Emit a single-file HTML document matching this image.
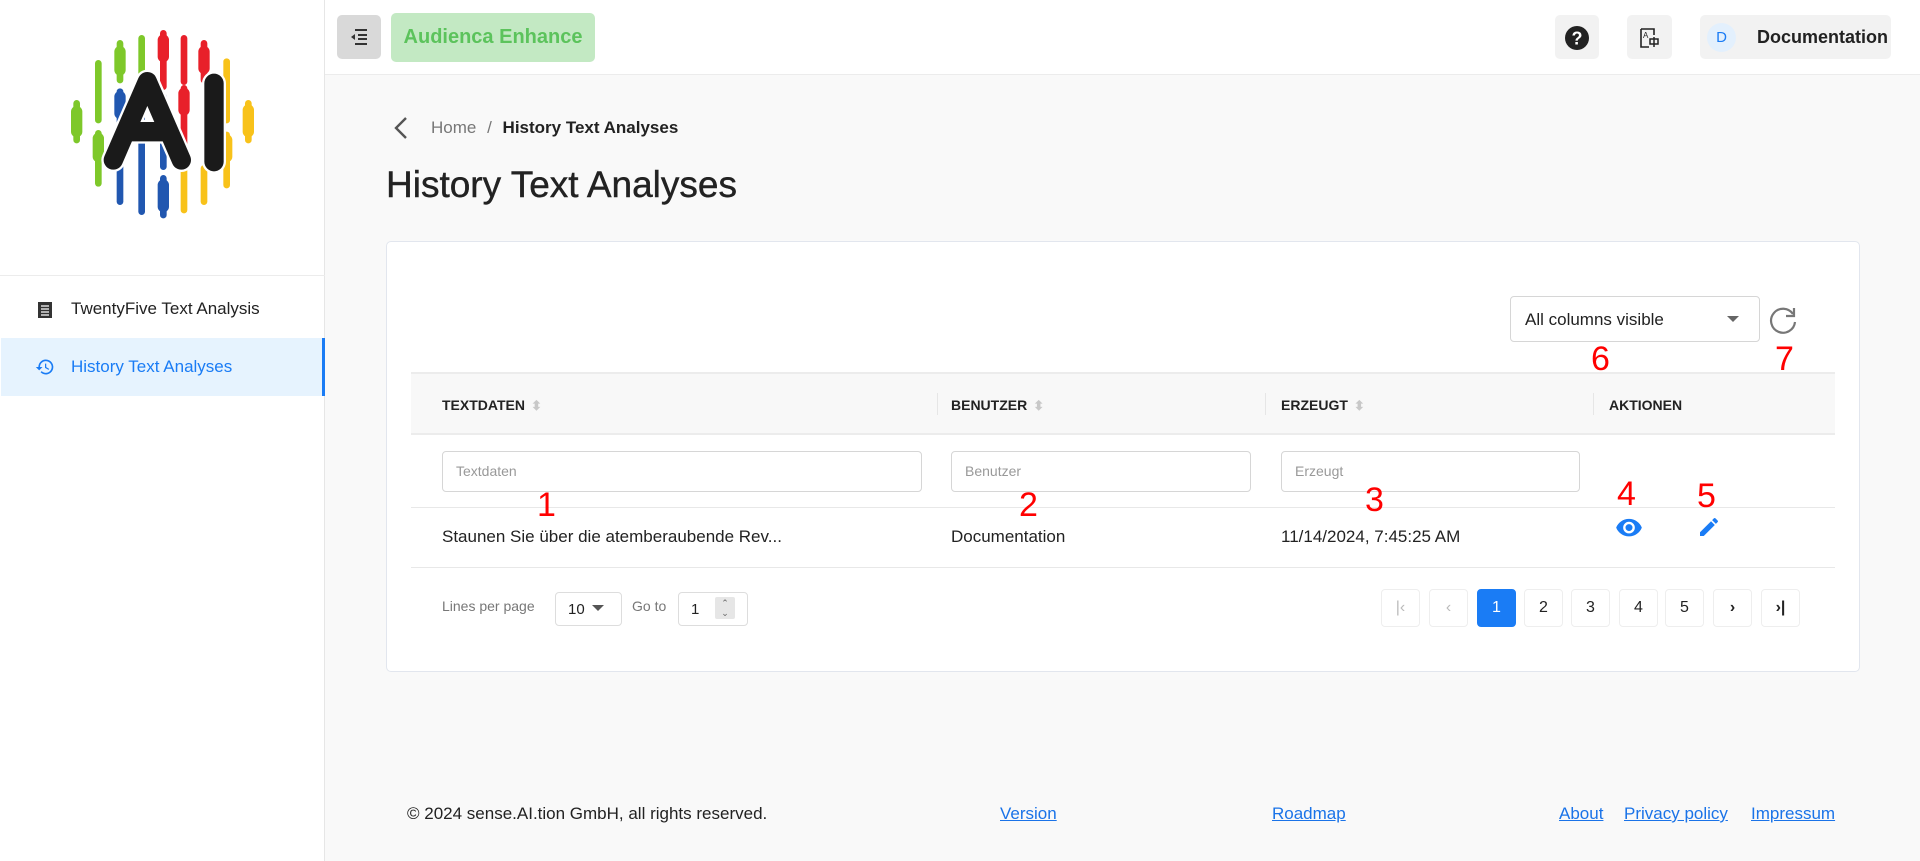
<!DOCTYPE html>
<html><head><meta charset="utf-8"><style>
*{box-sizing:border-box;margin:0;padding:0}
body{width:1920px;height:861px;overflow:hidden;background:#f9f9f9;font-family:"Liberation Sans",sans-serif;color:#222;position:relative}
.abs{position:absolute}
.side{left:0;top:0;width:325px;height:861px;background:#fff;border-right:1px solid #e6e6e6}
.top{left:325px;top:0;width:1595px;height:75px;background:#fff;border-bottom:1px solid #ececec}
.btn{background:#f2f2f2;border-radius:5px}
.card{left:386px;top:241px;width:1474px;height:431px;background:#fff;border:1px solid #e2e6ee;border-radius:5px}
.red{color:#f00;font-size:34px;font-family:"Liberation Sans",sans-serif}
.th{font-size:14px;font-weight:bold;color:#222;top:397px}
.srt{color:#c8c8c8;font-size:13px;margin-left:6px}
.inp{top:451px;height:41px;border:1px solid #d6d6d6;border-radius:4px;background:#fff;font-size:14px;color:#999;padding:11px 13px}
.pg{top:589px;width:39px;height:38px;border:1px solid #eee;border-radius:4px;background:#fff;font-size:16px;text-align:center;line-height:36px;color:#222}
.foot{top:804px;font-size:17px}
.foot a{color:#1a73e8;text-decoration:underline}
</style></head><body>
<div class="abs side"></div>
<svg class="abs" style="left:60px;top:20px" width="210" height="210" viewBox="0 0 630 630">
<g stroke-linecap="round" stroke-width="20" fill="none">
<line x1="50" y1="250" x2="50" y2="360" stroke="#7ec82a"/><line x1="50" y1="275" x2="50" y2="335" stroke="#7ec82a" stroke-width="34"/>
<line x1="115" y1="130" x2="115" y2="300" stroke="#7ec82a"/><line x1="115" y1="340" x2="115" y2="490" stroke="#7ec82a"/><line x1="115" y1="355" x2="115" y2="410" stroke="#7ec82a" stroke-width="34"/>
<line x1="180" y1="70" x2="180" y2="180" stroke="#7ec82a"/><line x1="180" y1="95" x2="180" y2="150" stroke="#7ec82a" stroke-width="34"/>
<line x1="180" y1="215" x2="180" y2="545" stroke="#2157b0"/><line x1="180" y1="230" x2="180" y2="280" stroke="#2157b0" stroke-width="34"/>
<line x1="245" y1="55" x2="245" y2="165" stroke="#7ec82a"/><line x1="245" y1="235" x2="245" y2="575" stroke="#2157b0"/>
<line x1="310" y1="40" x2="310" y2="200" stroke="#e8202a"/><line x1="310" y1="60" x2="310" y2="110" stroke="#e8202a" stroke-width="34"/>
<line x1="310" y1="475" x2="310" y2="585" stroke="#2157b0"/><line x1="310" y1="495" x2="310" y2="560" stroke="#2157b0" stroke-width="34"/>
<line x1="310" y1="230" x2="310" y2="440" stroke="#2157b0"/>
<line x1="372" y1="55" x2="372" y2="185" stroke="#e8202a"/><line x1="372" y1="205" x2="372" y2="380" stroke="#e8202a"/><line x1="372" y1="220" x2="372" y2="270" stroke="#e8202a" stroke-width="34"/>
<line x1="372" y1="445" x2="372" y2="570" stroke="#f8c21a"/>
<line x1="432" y1="70" x2="432" y2="180" stroke="#e8202a"/><line x1="432" y1="95" x2="432" y2="145" stroke="#e8202a" stroke-width="34"/>
<line x1="432" y1="445" x2="432" y2="545" stroke="#f8c21a"/>
<line x1="500" y1="125" x2="500" y2="300" stroke="#f8c21a"/><line x1="500" y1="345" x2="500" y2="495" stroke="#f8c21a"/><line x1="500" y1="360" x2="500" y2="410" stroke="#f8c21a" stroke-width="34"/>
<line x1="565" y1="250" x2="565" y2="360" stroke="#f8c21a"/><line x1="565" y1="270" x2="565" y2="335" stroke="#f8c21a" stroke-width="34"/>
</g>
<g stroke-linecap="round" stroke-linejoin="round" fill="none">
<path d="M160 420 L262 185 L364 420 M205 335 L320 335" stroke="#fff" stroke-width="72"/>
<path d="M160 420 L262 185 L364 420 M205 335 L320 335" stroke="#1a1a1a" stroke-width="58"/>
<line x1="462" y1="190" x2="462" y2="425" stroke="#fff" stroke-width="72"/>
<line x1="462" y1="190" x2="462" y2="425" stroke="#1a1a1a" stroke-width="58"/>
</g>
</svg>
<div class="abs" style="left:0;top:275px;width:325px;height:1px;background:#ececec"></div>
<svg class="abs" style="left:37px;top:301px" width="16" height="18" viewBox="0 0 16 18"><rect x="1" y="1" width="14" height="16" fill="#333"/><path d="M4 5h8M4 8h8M4 11h8M4 14h8" stroke="#fff" stroke-width="1.2"/></svg>
<div class="abs" style="left:71px;top:299px;font-size:17px">TwentyFive Text Analysis</div>
<div class="abs" style="left:1px;top:338px;width:324px;height:58px;background:#e6f3fe;border-right:3px solid #1a7cf5"></div>
<svg class="abs" style="left:35px;top:357px" width="20" height="20" viewBox="0 0 24 24"><path d="M13 3a9 9 0 0 0-9 9H1l4 4 4-4H6a7 7 0 1 1 2.05 4.95l-1.42 1.42A9 9 0 1 0 13 3zm-1 5v5l4.25 2.52.77-1.28-3.52-2.09V8z" fill="#1a7cf5"/></svg>
<div class="abs" style="left:71px;top:357px;font-size:17px;color:#1a7cf5">History Text Analyses</div>

<div class="abs top"></div>
<div class="abs" style="left:337px;top:15px;width:44px;height:44px;background:#d9d9d9;border-radius:5px"></div>
<svg class="abs" style="left:349px;top:28px" width="20" height="18" viewBox="0 0 20 18"><path d="M6 2h12M9 7h9M9 11h9M6 16h12" stroke="#333" stroke-width="2"/><path d="M2 9l4-3v6z" fill="#333"/></svg>
<div class="abs" style="left:391px;top:13px;width:204px;height:49px;background:#c3e9c3;border-radius:5px;color:#5cc35c;font-size:20px;font-weight:bold;text-align:center;line-height:49px">Audienca Enhance</div>
<div class="abs btn" style="left:1555px;top:15px;width:44px;height:44px"></div>
<svg class="abs" style="left:1564px;top:25px" width="26" height="26" viewBox="0 0 26 26"><circle cx="13" cy="13" r="12" fill="#222"/><text x="13" y="19.5" text-anchor="middle" fill="#fff" font-size="18" font-weight="bold" font-family="Liberation Sans">?</text></svg>
<div class="abs btn" style="left:1627px;top:15px;width:45px;height:44px"></div>
<svg class="abs" style="left:1640px;top:28px" width="20" height="20" viewBox="0 0 20 20"><path d="M1 1h13v6M1 1v18h8" stroke="#222" stroke-width="1.6" fill="none"/><text x="3" y="10" font-size="8" font-family="Liberation Sans" fill="#222">A</text><path d="M10 11h8v5h-8zM14 9v10" stroke="#222" stroke-width="1.5" fill="none"/></svg>
<div class="abs btn" style="left:1700px;top:15px;width:191px;height:44px"></div>
<div class="abs" style="left:1707px;top:23px;width:29px;height:29px;border-radius:50%;background:#e3f0fd;color:#1a7cf5;font-size:15px;text-align:center;line-height:29px">D</div>
<div class="abs" style="left:1757px;top:27px;font-size:18px;font-weight:bold;color:#222">Documentation</div>

<svg class="abs" style="left:393px;top:116px" width="16" height="24" viewBox="0 0 16 24"><path d="M13 2L3 12l10 10" stroke="#555" stroke-width="2.4" fill="none"/></svg>
<div class="abs" style="left:431px;top:118px;font-size:17px;color:#777">Home <span style="margin:0 6px">/</span> <b style="color:#222">History Text Analyses</b></div>
<div class="abs" style="left:386px;top:164px;font-size:37px;color:#222;-webkit-text-stroke:0.4px #222">History Text Analyses</div>

<div class="abs card"></div>
<div class="abs" style="left:1510px;top:296px;width:250px;height:46px;border:1px solid #d6d6d6;border-radius:4px;background:#fff;font-size:17px;padding:13px 14px;color:#222">All columns visible</div>
<div class="abs" style="left:1727px;top:316px;border-left:6px solid transparent;border-right:6px solid transparent;border-top:6px solid #666"></div>
<svg class="abs" style="left:1767px;top:303px" width="32" height="32" viewBox="0 0 32 32"><path d="M26 11A12 12 0 1 0 28 19" stroke="#777" stroke-width="2.2" fill="none"/><path d="M27 5v8h-8" fill="none" stroke="#777" stroke-width="2.2"/></svg>
<div class="abs red" style="left:1591px;top:340px">6</div>
<div class="abs red" style="left:1775px;top:340px">7</div>

<div class="abs" style="left:411px;top:372px;width:1424px;height:63px;background:#f8f8f8;border-top:2px solid #ececec;border-bottom:2px solid #ececec"></div>
<div class="abs th" style="left:442px">TEXTDATEN<span class="srt">⬍</span></div>
<div class="abs th" style="left:951px">BENUTZER<span class="srt">⬍</span></div>
<div class="abs th" style="left:1281px">ERZEUGT<span class="srt">⬍</span></div>
<div class="abs th" style="left:1609px">AKTIONEN</div>
<div class="abs" style="left:937px;top:393px;width:1px;height:22px;background:#e6e6e6"></div>
<div class="abs" style="left:1265px;top:393px;width:1px;height:22px;background:#e6e6e6"></div>
<div class="abs" style="left:1593px;top:393px;width:1px;height:22px;background:#e6e6e6"></div>
<div class="abs inp" style="left:442px;width:480px">Textdaten</div>
<div class="abs inp" style="left:951px;width:300px">Benutzer</div>
<div class="abs inp" style="left:1281px;width:299px">Erzeugt</div>
<div class="abs" style="left:411px;top:507px;width:1424px;height:1px;background:#e8e8e8"></div>
<div class="abs red" style="left:537px;top:486px">1</div>
<div class="abs red" style="left:1019px;top:486px">2</div>
<div class="abs red" style="left:1365px;top:481px">3</div>
<div class="abs red" style="left:1617px;top:475px">4</div>
<div class="abs red" style="left:1697px;top:477px">5</div>
<div class="abs" style="left:442px;top:527px;font-size:17px">Staunen Sie über die atemberaubende Rev...</div>
<div class="abs" style="left:951px;top:527px;font-size:17px">Documentation</div>
<div class="abs" style="left:1281px;top:527px;font-size:17px">11/14/2024, 7:45:25 AM</div>
<svg class="abs" style="left:1615px;top:517px" width="28" height="20" viewBox="0 0 24 16"><path d="M12 1C7 1 2.7 4.1 1 8.5 2.7 12.9 7 16 12 16s9.3-3.1 11-7.5C21.3 4.1 17 1 12 1zm0 12.5a5 5 0 1 1 0-10 5 5 0 0 1 0 10zm0-8a3 3 0 1 0 0 6 3 3 0 0 0 0-6z" fill="#1a7cf5"/></svg>
<svg class="abs" style="left:1697px;top:515px" width="24" height="24" viewBox="0 0 24 24"><path d="M3 17.25V21h3.75L17.81 9.940l-3.75-3.75L3 17.25zM20.71 7.04a1 1 0 0 0 0-1.41l-2.34-2.34a1 1 0 0 0-1.41 0l-1.83 1.83 3.75 3.75 1.83-1.83z" fill="#1a7cf5"/></svg>
<div class="abs" style="left:411px;top:567px;width:1424px;height:1px;background:#e8e8e8"></div>

<div class="abs" style="left:442px;top:598px;font-size:14px;color:#777">Lines per page</div>
<div class="abs" style="left:555px;top:592px;width:67px;height:34px;border:1px solid #ddd;border-radius:4px;background:#fff;font-size:15px;padding:8px 12px">10</div>
<div class="abs" style="left:592px;top:605px;border-left:6px solid transparent;border-right:6px solid transparent;border-top:6px solid #555"></div>
<div class="abs" style="left:632px;top:598px;font-size:14px;color:#777">Go to</div>
<div class="abs" style="left:678px;top:592px;width:70px;height:34px;border:1px solid #ddd;border-radius:4px;background:#fff;font-size:15px;padding:8px 12px">1</div>
<div class="abs" style="left:715px;top:597px;width:20px;height:22px;background:#e6e6e6;border-radius:2px;font-size:9px;color:#666;text-align:center;line-height:10px;padding-top:1px">⌃<br>⌄</div>
<div class="abs pg" style="left:1381px;color:#bbb">|‹</div>
<div class="abs pg" style="left:1429px;color:#bbb">‹</div>
<div class="abs pg" style="left:1477px;background:#1a7cf5;border-color:#1a7cf5;color:#fff">1</div>
<div class="abs pg" style="left:1524px">2</div>
<div class="abs pg" style="left:1571px">3</div>
<div class="abs pg" style="left:1619px">4</div>
<div class="abs pg" style="left:1665px">5</div>
<div class="abs pg" style="left:1713px;font-weight:bold">›</div>
<div class="abs pg" style="left:1761px;font-weight:bold">›|</div>

<div class="abs foot" style="left:407px">© 2024 sense.AI.tion GmbH, all rights reserved.</div>
<div class="abs foot" style="left:1000px"><a>Version</a></div>
<div class="abs foot" style="left:1272px"><a>Roadmap</a></div>
<div class="abs foot" style="left:1559px"><a>About</a></div>
<div class="abs foot" style="left:1624px"><a>Privacy policy</a></div>
<div class="abs foot" style="left:1751px"><a>Impressum</a></div>
</body></html>
